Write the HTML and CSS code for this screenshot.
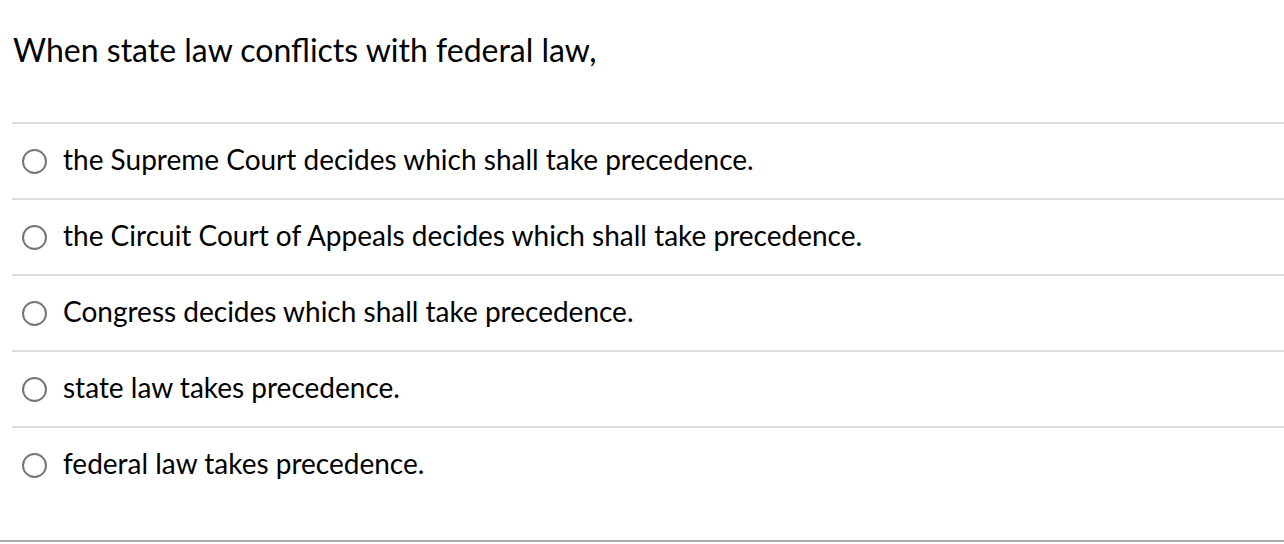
FILE: index.html
```html
<!DOCTYPE html>
<html>
<head>
<meta charset="utf-8">
<link rel="stylesheet" href="styles.css">
</head>
<body>
<div class="question">
  <div class="prompt">When state law conflicts with federal law,</div>
  <div class="answers">
    <label class="answer"><span class="radio"></span><span class="text">the Supreme Court decides which shall take precedence.</span></label>
    <label class="answer"><span class="radio"></span><span class="text">the Circuit Court of Appeals decides which shall take precedence.</span></label>
    <label class="answer"><span class="radio"></span><span class="text">Congress decides which shall take precedence.</span></label>
    <label class="answer"><span class="radio"></span><span class="text">state law takes precedence.</span></label>
    <label class="answer"><span class="radio"></span><span class="text">federal law takes precedence.</span></label>
  </div>
</div>
</body>
</html>
```
FILE: styles.css
```css
html, body {
  margin: 0;
  padding: 0;
  background: #fff;
}
body {
  font-family: Lato, "Open Sans", sans-serif;
  color: #000;
}
.question {
  height: 542px;
  border-bottom: 2px solid #a9a9a9;
  box-sizing: border-box;
  padding-left: 12px;
}
.prompt {
  font-size: 32px;
  line-height: 38px;
  padding-top: 31px;
  padding-left: 1px;
  height: 88px;
  box-sizing: border-box;
}
.answers {
  margin-top: 34px;
}
.answer {
  display: flex;
  align-items: center;
  height: 76px;
  border-top: 2px solid #dcdcdc;
  box-sizing: border-box;
}
.radio {
  width: 25px;
  height: 25px;
  border: 2px solid #767676;
  border-radius: 50%;
  box-sizing: border-box;
  margin-left: 10px;
  margin-right: 16px;
  flex: none;
}
.text {
  font-size: 28px;
  line-height: 34px;
  margin-bottom: 5px;
}
```
